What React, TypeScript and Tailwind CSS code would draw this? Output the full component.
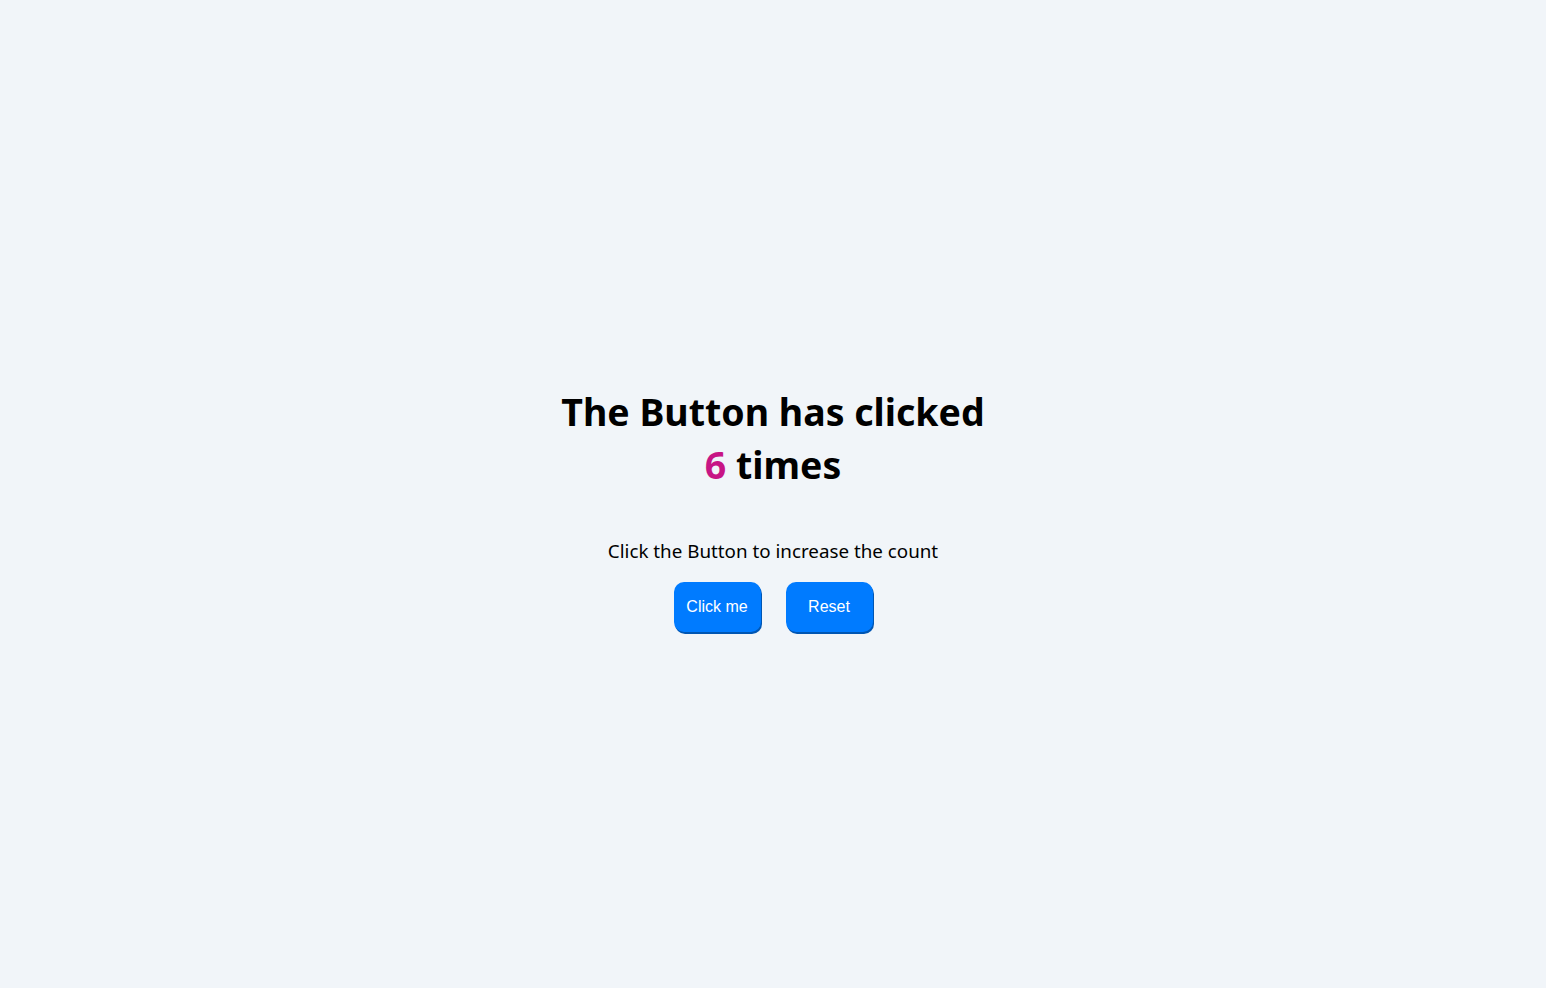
import { useState } from "react";

export default function App() {
  const [count, setCount] = useState(6);

  return (
    <div className="flex min-h-screen flex-col items-center justify-center bg-[#f1f5f9] pt-[28px] text-black font-['Noto_Sans',sans-serif]">
      <h1 className="text-center text-[37.5px] font-bold leading-[53px]">
        The Button has clicked
        <br />
        <span className="text-[#c71585]">{count}</span> times
      </h1>
      <p className="mt-[47px] text-[18.8px] leading-[26px]">Click the Button to increase the count</p>
      <div className="mt-[18px] flex gap-[25px] font-['Liberation_Sans',Arial,sans-serif]">
        <button
          className="h-[50px] w-[87px] rounded-[10px] bg-[#007bff] text-[16px] text-white shadow-[1px_2px_0_#0056b3]"
          onClick={() => setCount((c) => c + 1)}
        >
          Click me
        </button>
        <button
          className="h-[50px] w-[87px] rounded-[10px] bg-[#007bff] text-[16px] text-white shadow-[1px_2px_0_#0056b3]"
          onClick={() => setCount(0)}
        >
          Reset
        </button>
      </div>
    </div>
  );
}
